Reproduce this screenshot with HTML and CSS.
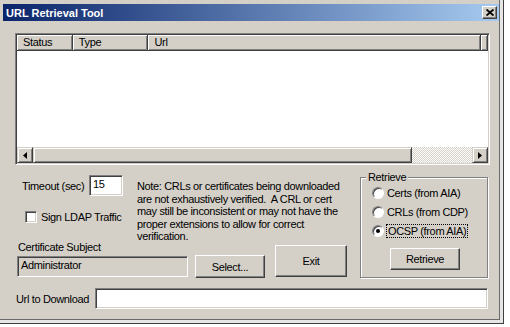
FILE: index.html
```html
<!DOCTYPE html>
<html lang="en">
<head>
    <meta charset="UTF-8">
    <title>URL Retrieval Tool</title>
    <link rel="stylesheet" href="styles.css">
</head>
<body>

    <div class="frame">
        <div class="window">
            <div class="titlebar">
                <span class="title">URL Retrieval Tool</span>
                <span class="close">
                    <svg width="8" height="7" viewBox="0 0 8 7"><path d="M0.5 0.5 L7.5 6.5 M7.5 0.5 L0.5 6.5" stroke="#000" stroke-width="1.8"/></svg>
                </span>
            </div>

            <div class="client">
                <div class="listview">
                    <div class="lv-header">
                        <div class="col col-status">Status</div>
                        <div class="col col-type">Type</div>
                        <div class="col col-url">Url</div>
                        <div class="col col-rest"></div>
                    </div>
                    <div class="lv-body"></div>
                    <div class="hscroll">
                        <div class="sb-btn">
                            <svg width="4" height="7" viewBox="0 0 4 7"><path d="M4 0 L0 3.5 L4 7 Z" fill="#000"/></svg>
                        </div>
                        <div class="sb-thumb"></div>
                        <div class="sb-track"></div>
                        <div class="sb-btn">
                            <svg width="4" height="7" viewBox="0 0 4 7"><path d="M0 0 L4 3.5 L0 7 Z" fill="#000"/></svg>
                        </div>
                    </div>
                </div>

                <div class="options">
                    <div class="main">
                        <div class="upper">
                            <div class="left-ctl">
                                <div class="timeout-row">
                                    <span class="timeout-label">Timeout (sec)</span>
                                    <div class="field timeout-field">15</div>
                                </div>
                                <div class="check-row">
                                    <span class="checkbox"></span>
                                    <span>Sign LDAP Traffic</span>
                                </div>
                            </div>
                            <p class="note">Note: CRLs or certificates being downloaded are not exhaustively verified.&nbsp; A CRL or cert may still be inconsistent or may not have the proper extensions to allow for correct verification.</p>
                        </div>
                        <div class="lower">
                            <div class="subject">
                                <div class="subject-label">Certificate Subject</div>
                                <div class="field readonly">Administrator</div>
                            </div>
                            <div class="btn btn-select">Select...</div>
                            <div class="btn btn-exit">Exit</div>
                        </div>
                    </div>

                    <fieldset class="group">
                        <legend>Retrieve</legend>
                        <div class="radio-row"><span class="radio"></span><span>Certs (from AIA)</span></div>
                        <div class="radio-row"><span class="radio"></span><span>CRLs (from CDP)</span></div>
                        <div class="radio-row"><span class="radio checked"><span class="dot"></span></span><span class="focus">OCSP (from AIA)</span></div>
                        <div class="btn btn-retrieve">Retrieve</div>
                    </fieldset>
                </div>

                <div class="url-row">
                    <span class="url-label">Url to Download</span>
                    <div class="field url-field"></div>
                </div>
            </div>
        </div>
    </div>

</body>
</html>
```

FILE: styles.css
```css
* { margin: 0; padding: 0; box-sizing: border-box; }

body {
    background: #fff;
    font-family: "Liberation Sans", Arial, sans-serif;
    font-size: 11px;
    letter-spacing: -0.35px;
    color: #000;
}

.frame {
    width: 504px;
    height: 324px;
    background: #e6e6e6;
    border-right: 1px solid #404040;
    border-bottom: 1px solid #404040;
}

.window {
    width: 500px;
    height: 320px;
    background: #d4d0c8;
    border-right: 1px solid #6a6a6a;
    border-bottom: 1px solid #6a6a6a;
    padding: 4px 0 0 3px;
}

/* title bar */
.titlebar {
    height: 17px;
    display: flex;
    align-items: center;
    justify-content: space-between;
    background: linear-gradient(to right, #0a246a, #a6caf0);
}

.title {
    color: #fff;
    font-weight: bold;
    letter-spacing: 0;
    padding-left: 3px;
}

.close {
    width: 15px;
    height: 13px;
    margin-right: 2px;
    display: flex;
    align-items: center;
    justify-content: center;
    background: #d4d0c8;
    border: 1px solid;
    border-color: #fff #404040 #404040 #fff;
    box-shadow: inset -1px -1px #808080;
}

.client {
    padding-left: 12px;
}

/* list view */
.listview {
    margin-top: 12px;
    width: 475px;
    height: 132px;
    background: #fff;
    border: 1px solid;
    border-color: #808080 #fff #fff #808080;
    box-shadow: inset 1px 1px #404040, inset -1px -1px #d4d0c8;
    padding: 1px;
    display: flex;
    flex-direction: column;
}

.lv-header {
    display: flex;
    height: 16px;
}

.lv-header .col {
    background: #d4d0c8;
    border-right: 1px solid #404040;
    border-bottom: 1px solid #404040;
    box-shadow: inset 1px 1px #fff, inset -1px -1px #808080;
    padding-left: 6px;
    line-height: 15px;
}

.col-status { width: 56px; }
.col-type { width: 76px; }
.col-url { width: 334px; }
.col-rest { flex: 1; }

.lv-body { flex: 1; }

.hscroll {
    display: flex;
    height: 16px;
}

.sb-btn, .sb-thumb {
    background: #d4d0c8;
    border: 1px solid;
    border-color: #d4d0c8 #404040 #404040 #d4d0c8;
    box-shadow: inset 1px 1px #fff, inset -1px -1px #808080;
}

.sb-btn {
    width: 16px;
    display: flex;
    align-items: center;
    justify-content: center;
}

.sb-thumb { width: 379px; }

.sb-track {
    flex: 1;
    background: repeating-conic-gradient(#fff 0 25%, #d4d0c8 0 50%) 0 0 / 2px 2px;
}

/* option area */
.options {
    display: flex;
    margin-top: 10px;
}

.main {
    width: 345px;
}

.upper {
    display: flex;
    height: 66px;
}

.left-ctl {
    width: 122px;
    padding-left: 7px;
}

.timeout-row {
    display: flex;
    align-items: center;
}

.timeout-label { width: 67px; }

.field {
    height: 21px;
    background: #fff;
    border: 1px solid;
    border-color: #808080 #fff #fff #808080;
    box-shadow: inset 1px 1px #404040, inset -1px -1px #d4d0c8;
    padding: 2px 0 0 3px;
}

.timeout-field { width: 34px; }

.check-row {
    display: flex;
    align-items: center;
    gap: 4px;
    margin-top: 15px;
    padding-left: 3px;
}

.checkbox {
    width: 12px;
    height: 12px;
    background: #fff;
    border: 1px solid;
    border-color: #808080 #fff #fff #808080;
    box-shadow: inset 1px 1px #404040, inset -1px -1px #d4d0c8;
}

.note {
    width: 216px;
    margin-top: 5px;
    line-height: 12.5px;
}

.lower {
    display: flex;
    align-items: flex-end;
    height: 37px;
}

.subject {
    width: 171px;
    margin-left: 2px;
}

.subject-label {
    padding-left: 1px;
    line-height: 13px;
    margin-bottom: 2px;
}

.field.readonly {
    background: #d4d0c8;
    margin-bottom: 1px;
}

.btn {
    display: flex;
    align-items: center;
    justify-content: center;
    background: #d4d0c8;
    border: 1px solid;
    border-color: #fff #404040 #404040 #fff;
    box-shadow: inset -1px -1px #808080;
}

.btn-select {
    width: 70px;
    height: 23px;
    margin-left: 7px;
}

.btn-exit {
    width: 72px;
    height: 32px;
    margin-left: 10px;
    margin-bottom: 1px;
}

/* retrieve group */
.group {
    width: 128px;
    height: 107px;
    margin-top: -4px;
    border: 1px solid #808080;
    box-shadow: 1px 1px #fff, inset 1px 1px #fff;
    padding: 0 0 0 11px;
}

.group legend {
    margin-left: -6px;
    padding: 0 2px;
    line-height: 13px;
    background: #d4d0c8;
}

.radio-row {
    display: flex;
    align-items: center;
    gap: 3px;
    height: 18px;
}

.radio-row + .radio-row { margin-top: 1px; }

.radio {
    width: 12px;
    height: 12px;
    border-radius: 50%;
    background: #fff;
    border: 1px solid;
    border-color: #808080 #fff #fff #808080;
    box-shadow: inset 1px 1px #404040;
    display: grid;
    place-items: center;
}

.dot {
    width: 4px;
    height: 4px;
    border-radius: 50%;
    background: #000;
}

.focus {
    outline: 1px dotted #000;
    padding: 0 1px;
}

.btn-retrieve {
    width: 70px;
    height: 22px;
    margin: 8px 0 0 18px;
}

/* url row */
.url-row {
    display: flex;
    align-items: center;
    margin-top: 10px;
}

.url-label {
    width: 80px;
    padding-left: 1px;
}

.url-field { width: 393px; }
```
